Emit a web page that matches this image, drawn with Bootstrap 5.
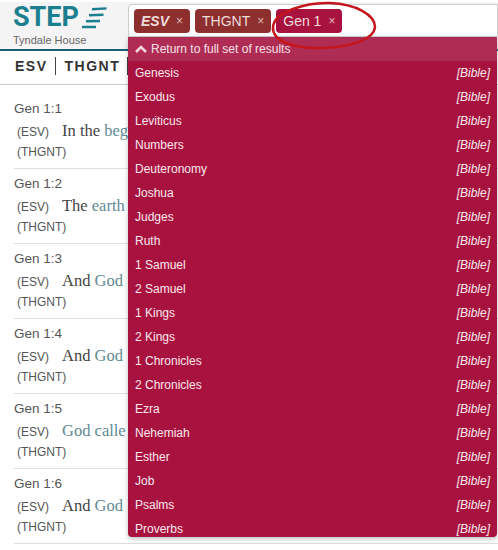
<!DOCTYPE html>
<html lang="en">
<head>
<meta charset="utf-8">
<title>STEP Bible</title>
<link href="https://cdn.jsdelivr.net/npm/bootstrap@5.3.0/dist/css/bootstrap.min.css" rel="stylesheet">
<style>
html,body{height:550px;overflow:hidden;background:#fff}
body{font-family:"Liberation Sans",Arial,sans-serif;position:relative;color:#555}
.top-hdr{height:49px;background:#f4f4f4;border-bottom:2px solid #17606e;padding-left:13px}
.brand-word{font-family:Roboto,"Liberation Sans",sans-serif;font-size:27px;line-height:30px;font-weight:700;color:#1b7f90;height:30px;margin-top:2px}
.brand-sub{font-size:11px;line-height:14px;color:#666;margin-top:1px}
.ver-bar{height:34px;border-bottom:1px solid #ccc;padding:0 0 3px 15px;font-size:14px;font-weight:700;color:#333;letter-spacing:1.5px}
.ver-item{line-height:20px}
.ver-sep{border-left:1px solid #444;height:18px;margin:0 9px 0 7px}
.verse-list{padding:9px 0 0 14px}
.verse-row{height:75px;border-bottom:1px solid #ddd;width:484px;padding-top:5px}
.verse-ref{font-size:13.500px;line-height:20px;color:#555;margin-bottom:2px}
.verse-line{font-size:12px;line-height:20px;height:20px;color:#555;padding-left:3px;white-space:nowrap}
.verse-ref + .verse-line{height:21px}
.verse-text{font-family:"Liberation Serif",Georgia,serif;font-size:16.500px;color:#444;margin-left:13px;line-height:20px}
.verse-text b{font-weight:400;color:#5f8a94}
.search-box{position:absolute;left:128px;top:4px;right:0;height:33px;background:#fff;border:1px solid #ccc;border-radius:4px 0 0 0;padding:4px 5px;gap:5px}
.pick{height:24px;border-radius:4px;color:#f0dcdc;font-size:14px;padding:0 7px;gap:7px;line-height:24px}
.pick-x{font-size:12px;color:#e0b8b8}
.pick-brown{background:#8e2f2f}
.pick-red{background:#a8123f}
.pick-em{font-style:italic;font-weight:700}
.drop{position:absolute;left:128px;top:37px;width:369px;height:500px;overflow:hidden;background:#a8123f;border-radius:0 0 4px 4px;box-shadow:0 2px 5px rgba(0,0,0,.25);color:#fbe8ee;font-size:12px}
.drop-head{height:24px;background:#af2d55;padding-left:7px;font-size:12px;color:#f8e0e8;gap:4px}
.drop-row{height:24px;padding:0 7px}
.drop-tag{font-style:italic;font-size:12px}
.circle-mark{position:absolute;left:268px;top:0;width:112px;height:52px;pointer-events:none}
.step-lines{margin-left:3px;margin-top:2px}
</style>
</head>
<body>
<div class="top-hdr">
  <div class="d-flex brand-word">STEP<svg class="step-lines" width="25" height="26" viewBox="0 0 25 26"><path d="M10 5.200 L24.500 4.400 M7 11.200 L21.500 10.700 M4 17.200 L18 17 M0 23 L14 23" stroke="#1b7f90" stroke-width="2.400" fill="none"/></svg></div>
  <div class="brand-sub">Tyndale House</div>
</div>
<div class="ver-bar d-flex align-items-center">
  <span class="ver-item">ESV</span><span class="ver-sep"></span><span class="ver-item">THGNT</span><span class="ver-sep"></span>
</div>
<div class="verse-list">
  <div class="verse-row"><div class="verse-ref">Gen 1:1</div><div class="verse-line">(ESV)<span class="verse-text">In the <b>beg</b></span></div><div class="verse-line">(THGNT)</div></div>
  <div class="verse-row"><div class="verse-ref">Gen 1:2</div><div class="verse-line">(ESV)<span class="verse-text">The <b>earth</b></span></div><div class="verse-line">(THGNT)</div></div>
  <div class="verse-row"><div class="verse-ref">Gen 1:3</div><div class="verse-line">(ESV)<span class="verse-text">And <b>God</b></span></div><div class="verse-line">(THGNT)</div></div>
  <div class="verse-row"><div class="verse-ref">Gen 1:4</div><div class="verse-line">(ESV)<span class="verse-text">And <b>God</b></span></div><div class="verse-line">(THGNT)</div></div>
  <div class="verse-row"><div class="verse-ref">Gen 1:5</div><div class="verse-line">(ESV)<span class="verse-text"><b>God calle</b></span></div><div class="verse-line">(THGNT)</div></div>
  <div class="verse-row"><div class="verse-ref">Gen 1:6</div><div class="verse-line">(ESV)<span class="verse-text">And <b>God</b></span></div><div class="verse-line">(THGNT)</div></div>
</div>
<div class="search-box d-flex align-items-start">
  <span class="pick pick-brown d-flex align-items-center"><span class="pick-em">ESV</span><span class="pick-x">×</span></span>
  <span class="pick pick-brown d-flex align-items-center"><span>THGNT</span><span class="pick-x">×</span></span>
  <span class="pick pick-red d-flex align-items-center"><span>Gen 1</span><span class="pick-x">×</span></span>
</div>
<div class="drop">
  <div class="drop-head d-flex align-items-center"><svg width="12" height="8" viewBox="0 0 12 8"><path d="M1 7 L6 2 L11 7" stroke="#f3d5df" stroke-width="2.500" fill="none"/></svg>Return to full set of results</div>
  <div class="drop-row d-flex justify-content-between align-items-center"><span>Genesis</span><span class="drop-tag">[Bible]</span></div>
  <div class="drop-row d-flex justify-content-between align-items-center"><span>Exodus</span><span class="drop-tag">[Bible]</span></div>
  <div class="drop-row d-flex justify-content-between align-items-center"><span>Leviticus</span><span class="drop-tag">[Bible]</span></div>
  <div class="drop-row d-flex justify-content-between align-items-center"><span>Numbers</span><span class="drop-tag">[Bible]</span></div>
  <div class="drop-row d-flex justify-content-between align-items-center"><span>Deuteronomy</span><span class="drop-tag">[Bible]</span></div>
  <div class="drop-row d-flex justify-content-between align-items-center"><span>Joshua</span><span class="drop-tag">[Bible]</span></div>
  <div class="drop-row d-flex justify-content-between align-items-center"><span>Judges</span><span class="drop-tag">[Bible]</span></div>
  <div class="drop-row d-flex justify-content-between align-items-center"><span>Ruth</span><span class="drop-tag">[Bible]</span></div>
  <div class="drop-row d-flex justify-content-between align-items-center"><span>1 Samuel</span><span class="drop-tag">[Bible]</span></div>
  <div class="drop-row d-flex justify-content-between align-items-center"><span>2 Samuel</span><span class="drop-tag">[Bible]</span></div>
  <div class="drop-row d-flex justify-content-between align-items-center"><span>1 Kings</span><span class="drop-tag">[Bible]</span></div>
  <div class="drop-row d-flex justify-content-between align-items-center"><span>2 Kings</span><span class="drop-tag">[Bible]</span></div>
  <div class="drop-row d-flex justify-content-between align-items-center"><span>1 Chronicles</span><span class="drop-tag">[Bible]</span></div>
  <div class="drop-row d-flex justify-content-between align-items-center"><span>2 Chronicles</span><span class="drop-tag">[Bible]</span></div>
  <div class="drop-row d-flex justify-content-between align-items-center"><span>Ezra</span><span class="drop-tag">[Bible]</span></div>
  <div class="drop-row d-flex justify-content-between align-items-center"><span>Nehemiah</span><span class="drop-tag">[Bible]</span></div>
  <div class="drop-row d-flex justify-content-between align-items-center"><span>Esther</span><span class="drop-tag">[Bible]</span></div>
  <div class="drop-row d-flex justify-content-between align-items-center"><span>Job</span><span class="drop-tag">[Bible]</span></div>
  <div class="drop-row d-flex justify-content-between align-items-center"><span>Psalms</span><span class="drop-tag">[Bible]</span></div>
  <div class="drop-row d-flex justify-content-between align-items-center"><span>Proverbs</span><span class="drop-tag">[Bible]</span></div>
</div>
<svg class="circle-mark" viewBox="0 0 112 52"><path d="M5 27 C6 12 38 2 62 3 C88 4 107 15 107 27 C106 39 84 47 56 48 C28 49 4 42 5 27 Z" fill="none" stroke="#c4161c" stroke-width="2.500"/></svg>
<script src="https://cdn.jsdelivr.net/npm/bootstrap@5.3.0/dist/js/bootstrap.bundle.min.js"></script>
</body>
</html>
